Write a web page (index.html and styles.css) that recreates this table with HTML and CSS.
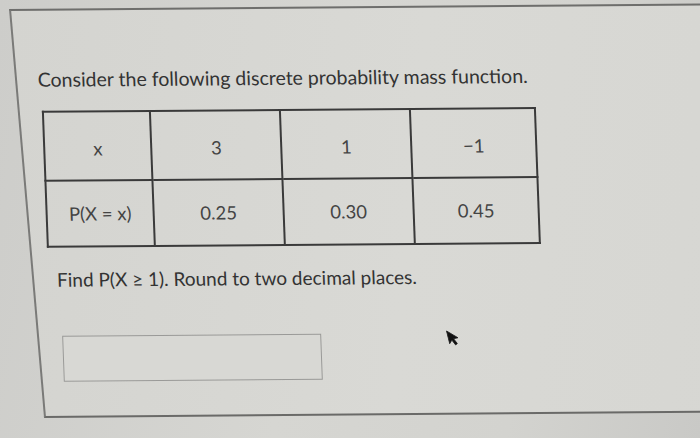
FILE: index.html
```html
<!DOCTYPE html>
<html lang="en">
<head>
    <meta charset="UTF-8">
    <title>Question</title>
    <link rel="stylesheet" href="styles.css">
</head>
<body>
    <div class="panel">
        <div class="content">
            <p class="prompt">Consider the following discrete probability mass function.</p>
            <table class="pmf">
                <tr class="row-x">
                    <td class="head">x</td>
                    <td>3</td>
                    <td>1</td>
                    <td class="last">&minus;1</td>
                </tr>
                <tr class="row-p">
                    <td class="head">P(X = x)</td>
                    <td>0.25</td>
                    <td>0.30</td>
                    <td class="last">0.45</td>
                </tr>
            </table>
            <p class="task">Find P(X &ge; 1). Round to two decimal places.</p>
            <div class="answer-row">
                <input type="text" class="answer">
                <svg class="pointer" width="12" height="18" viewBox="0 0 12 18">
                    <path d="M1 1 L1 14 L4 11 L6.5 16.5 L8.5 15.5 L6 10 L10.5 10 Z" fill="#111" stroke="#222" stroke-width="0.8"/>
                </svg>
            </div>
        </div>
    </div>
</body>
</html>
```

FILE: styles.css
```css
html, body {
    margin: 0;
    height: 100%;
    overflow: hidden;
}
body {
    font-family: Lato, "Open Sans", sans-serif;
    background: linear-gradient(100deg, #cdcdca 0%, #d6d6d2 45%, #d3d3cf 75%, #c9c9c6 100%);
    padding-top: 9px;
    padding-left: 9px;
    box-sizing: border-box;
}
.panel {
    width: 760px;
    height: 405px;
    border-top: 2px solid #6e6e6c;
    border-left: 2px solid #7a7a78;
    border-bottom: 2px solid #6a6a68;
    background: linear-gradient(100deg, #d4d4d0 0%, #d9d9d5 50%, #d6d6d2 100%);
    transform: skew(4.9deg, -0.45deg);
    transform-origin: top left;
}
.content {
    transform: skewX(-2.8deg);
    transform-origin: top left;
    padding-top: 57px;
    padding-left: 24px;
}
.prompt {
    margin: 0;
    font-size: 19.5px;
    color: #333;
}
.pmf {
    margin-top: 20px;
    margin-left: 3px;
    border-collapse: collapse;
    color: #444;
    font-size: 18.5px;
}
.pmf td {
    border: 2px solid #3a3a3a;
    text-align: center;
    padding: 0;
    width: 128px;
}
.pmf td.head {
    width: 105px;
}
.pmf td.last {
    width: 123px;
}
.row-x td {
    height: 63px;
    padding-top: 4px;
}
.row-p td {
    height: 64px;
}
.task {
    margin: 20px 0 0 12px;
    font-size: 19px;
    color: #333;
}
.answer-row {
    display: flex;
    align-items: flex-start;
    margin-top: 45px;
    margin-left: 15px;
}
.answer {
    width: 259px;
    height: 46px;
    box-sizing: border-box;
    border: 1px solid #9a9a98;
    background: #d8d8d4;
    margin: 0;
}
.pointer {
    margin-left: 126px;
    margin-top: -4px;
    transform: rotate(-12deg);
}
```
